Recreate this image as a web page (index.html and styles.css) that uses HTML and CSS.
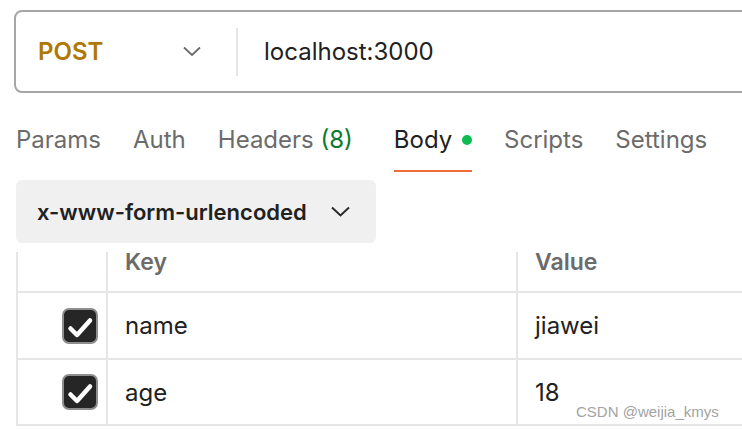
FILE: index.html
```html
<!DOCTYPE html>
<html lang="en">
<head>
    <meta charset="UTF-8">
    <meta name="viewport" content="width=device-width, initial-scale=1.0">
    <title>POST localhost:3000</title>
    <link rel="stylesheet" href="styles.css">
</head>
<body>
    <div class="url-bar">
        <div class="method">
            <span class="method-name">POST</span>
            <svg class="chevron" width="18" height="11" viewBox="0 0 18 11"><path d="M1 1.5 L9 9 L17 1.5" fill="none" stroke="#6b6b6b" stroke-width="1.8"/></svg>
        </div>
        <div class="url">localhost:3000</div>
    </div>

    <div class="tabs">
        <div class="tab">Params</div>
        <div class="tab">Auth</div>
        <div class="tab">Headers <span class="count">(8)</span></div>
        <div class="tab active">Body <span class="dot"></span></div>
        <div class="tab">Scripts</div>
        <div class="tab">Settings</div>
    </div>

    <div class="body-type">
        <span>x-www-form-urlencoded</span>
        <svg width="19" height="11" viewBox="0 0 19 11"><path d="M1 1.5 L9.5 9.5 L18 1.5" fill="none" stroke="#2b2b2b" stroke-width="2"/></svg>
    </div>

    <div class="params">
        <div class="cell head"></div>
        <div class="cell head key">Key</div>
        <div class="cell head">Value</div>

        <div class="cell check">
            <svg width="36" height="36" viewBox="0 0 36 36"><rect x="1" y="1" width="34" height="34" rx="6" fill="#262626" stroke="#8e8e8e" stroke-width="2"/><path d="M8.5 20.5 L15 27 L28 12.5" fill="none" stroke="#fff" stroke-width="4.5" stroke-linecap="round" stroke-linejoin="round"/></svg>
        </div>
        <div class="cell key">name</div>
        <div class="cell">jiawei</div>

        <div class="cell check">
            <svg width="36" height="36" viewBox="0 0 36 36"><rect x="1" y="1" width="34" height="34" rx="6" fill="#262626" stroke="#8e8e8e" stroke-width="2"/><path d="M8.5 20.5 L15 27 L28 12.5" fill="none" stroke="#fff" stroke-width="4.5" stroke-linecap="round" stroke-linejoin="round"/></svg>
        </div>
        <div class="cell key">age</div>
        <div class="cell">18</div>
    </div>

    <div class="watermark">CSDN @weijia_kmys</div>
</body>
</html>
```

FILE: styles.css
```css
body {
    margin: 0;
    font-family: Inter, "Noto Sans", sans-serif;
    color: #212121;
    background-color: #ffffff;
    overflow: hidden;
    position: relative;
    height: 430px;
}
.url-bar {
    display: flex;
    align-items: center;
    height: 79px;
    margin: 10px -20px 0 14px;
    border: 2px solid #a6a6a6;
    border-radius: 8px;
}
.method {
    display: flex;
    align-items: center;
    width: 198px;
    padding-left: 22px;
    height: 48px;
    border-right: 2px solid #e6e6e6;
}
.method-name {
    color: #b07800;
    font-size: 24px;
    font-weight: 600;
    width: 145px;
}
.url {
    padding-left: 26px;
    font-size: 24px;
}
.tabs {
    display: flex;
    margin: 31px 0 0 16px;
}
.tab {
    font-size: 24px;
    color: #6b6b6b;
    line-height: 32px;
    padding-bottom: 14px;
    margin-right: 32px;
    border-bottom: 2px solid transparent;
}
.tab .count {
    color: #0a7a2e;
}
.tab.active {
    color: #212121;
    border-bottom-color: #f26b3a;
    margin-left: 9px;
}
.dot {
    display: inline-block;
    width: 10px;
    height: 10px;
    border-radius: 50%;
    background-color: #0cbb52;
    margin-left: 3px;
    vertical-align: 3px;
}
.body-type {
    display: flex;
    align-items: center;
    justify-content: space-between;
    width: 313px;
    height: 63px;
    margin: 8px 0 0 16px;
    padding: 0 26px 0 21px;
    background-color: #f0f0f0;
    border-radius: 6px;
    font-size: 22px;
    font-weight: 600;
    color: #212121;
}
.params {
    display: grid;
    grid-template-columns: 90px 410px 300px;
    grid-template-rows: 41px 67px 66px 20px;
    margin: 9px 0 0 16px;
}
.cell {
    border-left: 2px solid #e6e6e6;
    border-bottom: 2px solid #e6e6e6;
    display: flex;
    align-items: center;
    padding-left: 17px;
    font-size: 24px;
}
.cell.key {
    padding-left: 17px;
}
.cell.head {
    align-items: flex-start;
    font-size: 23px;
    line-height: 20px;
    font-weight: 600;
    color: #6b6b6b;
}
.cell.check {
    justify-content: flex-end;
    padding: 0 8px 0 0;
}
.watermark {
    position: absolute;
    left: 576px;
    top: 403px;
    font-family: "Liberation Sans", Arial, sans-serif;
    font-size: 15px;
    color: #a3a3a3;
    text-shadow: 0 0 2px #ffffff;
}
```
